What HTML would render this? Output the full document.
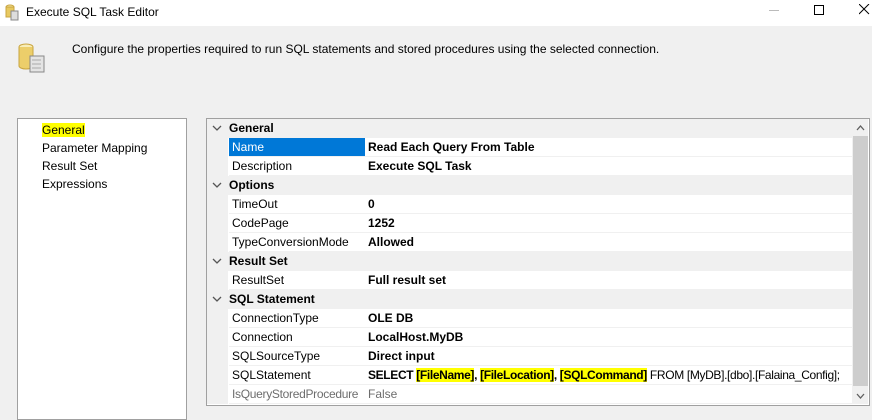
<!DOCTYPE html><html><head><style>
body{margin:0;width:872px;height:412px;overflow:hidden;background:#f0f0f0;font-family:"Liberation Sans",sans-serif;font-size:12px;color:#000;position:relative}
.a{position:absolute;white-space:nowrap}
.hl{background:#ffff00}
.row{position:absolute;left:207px;width:645px;height:19px}
.cat{background:#f0f0f0;font-weight:bold}
.n{position:absolute;left:22px;width:133px;height:18px;padding-left:3px;line-height:18px;border-right:1px solid #f0f0f0;border-bottom:1px solid #f0f0f0;background:#fff;overflow:hidden}
.v{position:absolute;left:158px;right:0;height:18px;padding-left:3px;line-height:18px;font-weight:bold;border-bottom:1px solid #f0f0f0;background:#fff;white-space:nowrap}
.c{position:absolute;left:22px;line-height:19px}
.chev{position:absolute;left:5px;top:6px}
</style></head><body>
<div class="a" style="left:0;top:0;width:872px;height:26px;background:#fff"></div>
<svg class="a" style="left:5px;top:4px" width="14" height="17"><ellipse cx="5" cy="3" rx="4" ry="2" fill="#f5e6a0" stroke="#c9a540"/><rect x="1" y="3" width="8" height="10" fill="#e8c960" stroke="#c9a540"/><rect x="6" y="7" width="7" height="9" fill="#ddd" stroke="#888"/></svg>
<div class="a" style="left:26px;top:5px;font-size:12px">Execute SQL Task Editor</div>
<div class="a" style="left:769px;top:10px;width:10px;height:1px;background:#bbb"></div>
<div class="a" style="left:814px;top:5px;width:8px;height:8px;border:1px solid #000"></div>
<svg class="a" style="left:859px;top:4px" width="11" height="11"><path d="M0 0L10 10M10 0L0 10" stroke="#000"/></svg>
<svg class="a" style="left:17px;top:42px" width="32" height="34"><ellipse cx="9" cy="5" rx="7" ry="3" fill="#f8edb8" stroke="#c9a540"/><path d="M2 5V24A7 3 0 0 0 16 24V5" fill="#ecce6a" stroke="#c9a540"/><path d="M13 14h14v16h-14z" fill="#e4e4e4" stroke="#888"/><path d="M15 18h9M15 22h9M15 26h9" stroke="#aaa"/></svg>
<div class="a" style="left:72px;top:42px">Configure the properties required to run SQL statements and stored procedures using the selected connection.</div>
<div class="a" style="left:17px;top:118px;width:168px;height:300px;background:#fff;border:1px solid #a0a0a0"></div>
<div class="a" style="left:42px;top:121px;line-height:18px"><span class="hl">General</span><br>Parameter Mapping<br>Result Set<br>Expressions</div>
<div class="a" style="left:206px;top:118px;width:662px;height:286px;background:#fff;border:1px solid #a0a0a0"></div>
<div class="a" style="left:207px;top:119px;width:21px;height:285px;background:#f0f0f0"></div>
<div class="row cat" style="top:119px"><svg class="chev" width="10" height="6"><path d="M1 1L5 5L9 1" stroke="#555" fill="none" stroke-width="1.3"/></svg><span class="c">General</span></div>
<div class="row" style="top:138px"><div class="n" style="background:#0078d7;color:#fff">Name</div><div class="v">Read Each Query From Table</div></div>
<div class="row" style="top:157px"><div class="n">Description</div><div class="v">Execute SQL Task</div></div>
<div class="row cat" style="top:176px"><svg class="chev" width="10" height="6"><path d="M1 1L5 5L9 1" stroke="#555" fill="none" stroke-width="1.3"/></svg><span class="c">Options</span></div>
<div class="row" style="top:195px"><div class="n">TimeOut</div><div class="v">0</div></div>
<div class="row" style="top:214px"><div class="n">CodePage</div><div class="v">1252</div></div>
<div class="row" style="top:233px"><div class="n">TypeConversionMode</div><div class="v">Allowed</div></div>
<div class="row cat" style="top:252px"><svg class="chev" width="10" height="6"><path d="M1 1L5 5L9 1" stroke="#555" fill="none" stroke-width="1.3"/></svg><span class="c">Result Set</span></div>
<div class="row" style="top:271px"><div class="n">ResultSet</div><div class="v">Full result set</div></div>
<div class="row cat" style="top:290px"><svg class="chev" width="10" height="6"><path d="M1 1L5 5L9 1" stroke="#555" fill="none" stroke-width="1.3"/></svg><span class="c">SQL Statement</span></div>
<div class="row" style="top:309px"><div class="n">ConnectionType</div><div class="v">OLE DB</div></div>
<div class="row" style="top:328px"><div class="n">Connection</div><div class="v">LocalHost.MyDB</div></div>
<div class="row" style="top:347px"><div class="n">SQLSourceType</div><div class="v">Direct input</div></div>
<div class="row" style="top:366px"><div class="n">SQLStatement</div><div class="v" style="font-weight:normal;letter-spacing:-0.35px"><b>SELECT <span class="hl">[FileName]</span>, <span class="hl">[FileLocation]</span>, <span class="hl">[SQLCommand]</span></b> FROM [MyDB].[dbo].[Falaina_Config];</div></div>
<div class="row" style="top:385px"><div class="n" style="color:#6d6d6d;letter-spacing:-0.3px">IsQueryStoredProcedure</div><div class="v" style="font-weight:normal;color:#6d6d6d">False</div></div>
<div class="a" style="left:852px;top:119px;width:16px;height:285px;background:#f0f0f0"></div>
<div class="a" style="left:853px;top:136px;width:15px;height:250px;background:#cdcdcd"></div>
<svg class="a" style="left:856px;top:125px" width="9" height="6"><path d="M1 5L4.5 1L8 5" stroke="#606060" fill="none" stroke-width="1.3"/></svg>
<svg class="a" style="left:856px;top:393px" width="9" height="6"><path d="M1 1L4.5 5L8 1" stroke="#606060" fill="none" stroke-width="1.3"/></svg>
</body></html>
